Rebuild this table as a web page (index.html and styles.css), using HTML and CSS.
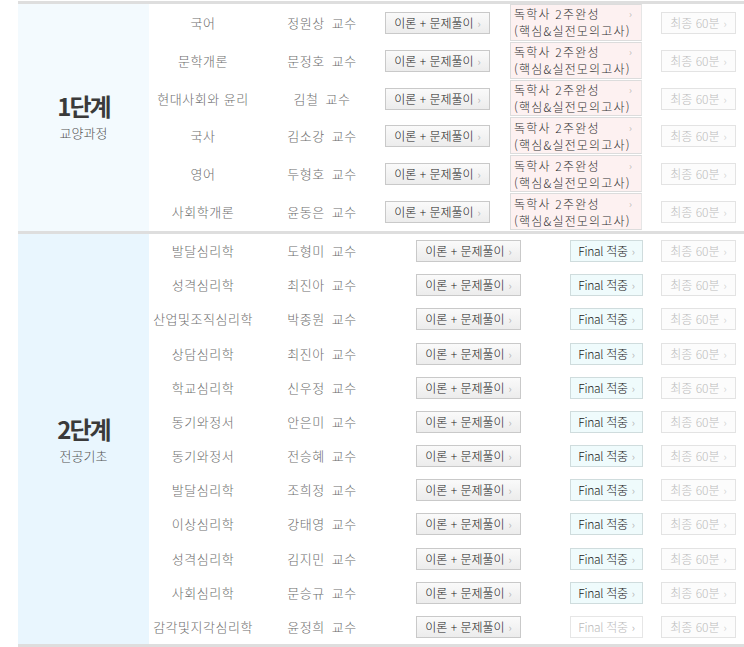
FILE: index.html
```html
<!DOCTYPE html>
<html lang="ko">
<head>
<meta charset="utf-8">
<link rel="stylesheet" href="styles.css">
</head>
<body>
<div class="wrap">
  <section class="stage stage1">
    <div class="label"><div class="lv">1단계</div><div class="sub">교양과정</div></div>
    <div class="rows">
      <div class="row"><span class="subj">국어</span><span class="prof">정원상 교수</span><span class="btn b1">이론 + 문제풀이 <i>›</i></span><span class="pink"><span class="pl">독학사 2주완성<i>›</i></span><span class="p2">(핵심&amp;실전모의고사)</span></span><span class="btn off">최종 60분 <i>›</i></span></div>
      <div class="row"><span class="subj">문학개론</span><span class="prof">문정호 교수</span><span class="btn b1">이론 + 문제풀이 <i>›</i></span><span class="pink"><span class="pl">독학사 2주완성<i>›</i></span><span class="p2">(핵심&amp;실전모의고사)</span></span><span class="btn off">최종 60분 <i>›</i></span></div>
      <div class="row"><span class="subj">현대사회와 윤리</span><span class="prof">김철 교수</span><span class="btn b1">이론 + 문제풀이 <i>›</i></span><span class="pink"><span class="pl">독학사 2주완성<i>›</i></span><span class="p2">(핵심&amp;실전모의고사)</span></span><span class="btn off">최종 60분 <i>›</i></span></div>
      <div class="row"><span class="subj">국사</span><span class="prof">김소강 교수</span><span class="btn b1">이론 + 문제풀이 <i>›</i></span><span class="pink"><span class="pl">독학사 2주완성<i>›</i></span><span class="p2">(핵심&amp;실전모의고사)</span></span><span class="btn off">최종 60분 <i>›</i></span></div>
      <div class="row"><span class="subj">영어</span><span class="prof">두형호 교수</span><span class="btn b1">이론 + 문제풀이 <i>›</i></span><span class="pink"><span class="pl">독학사 2주완성<i>›</i></span><span class="p2">(핵심&amp;실전모의고사)</span></span><span class="btn off">최종 60분 <i>›</i></span></div>
      <div class="row"><span class="subj">사회학개론</span><span class="prof">윤동은 교수</span><span class="btn b1">이론 + 문제풀이 <i>›</i></span><span class="pink"><span class="pl">독학사 2주완성<i>›</i></span><span class="p2">(핵심&amp;실전모의고사)</span></span><span class="btn off">최종 60분 <i>›</i></span></div>
    </div>
  </section>
  <section class="stage stage2">
    <div class="label"><div class="lv">2단계</div><div class="sub">전공기초</div></div>
    <div class="rows">
      <div class="row"><span class="subj">발달심리학</span><span class="prof">도형미 교수</span><span class="btn b2">이론 + 문제풀이 <i>›</i></span><span class="btn fin">Final 적중 <i>›</i></span><span class="btn off">최종 60분 <i>›</i></span></div>
      <div class="row"><span class="subj">성격심리학</span><span class="prof">최진아 교수</span><span class="btn b2">이론 + 문제풀이 <i>›</i></span><span class="btn fin">Final 적중 <i>›</i></span><span class="btn off">최종 60분 <i>›</i></span></div>
      <div class="row"><span class="subj">산업및조직심리학</span><span class="prof">박종원 교수</span><span class="btn b2">이론 + 문제풀이 <i>›</i></span><span class="btn fin">Final 적중 <i>›</i></span><span class="btn off">최종 60분 <i>›</i></span></div>
      <div class="row"><span class="subj">상담심리학</span><span class="prof">최진아 교수</span><span class="btn b2">이론 + 문제풀이 <i>›</i></span><span class="btn fin">Final 적중 <i>›</i></span><span class="btn off">최종 60분 <i>›</i></span></div>
      <div class="row"><span class="subj">학교심리학</span><span class="prof">신우정 교수</span><span class="btn b2">이론 + 문제풀이 <i>›</i></span><span class="btn fin">Final 적중 <i>›</i></span><span class="btn off">최종 60분 <i>›</i></span></div>
      <div class="row"><span class="subj">동기와정서</span><span class="prof">안은미 교수</span><span class="btn b2">이론 + 문제풀이 <i>›</i></span><span class="btn fin">Final 적중 <i>›</i></span><span class="btn off">최종 60분 <i>›</i></span></div>
      <div class="row"><span class="subj">동기와정서</span><span class="prof">전승혜 교수</span><span class="btn b2">이론 + 문제풀이 <i>›</i></span><span class="btn fin">Final 적중 <i>›</i></span><span class="btn off">최종 60분 <i>›</i></span></div>
      <div class="row"><span class="subj">발달심리학</span><span class="prof">조희정 교수</span><span class="btn b2">이론 + 문제풀이 <i>›</i></span><span class="btn fin">Final 적중 <i>›</i></span><span class="btn off">최종 60분 <i>›</i></span></div>
      <div class="row"><span class="subj">이상심리학</span><span class="prof">강태영 교수</span><span class="btn b2">이론 + 문제풀이 <i>›</i></span><span class="btn fin">Final 적중 <i>›</i></span><span class="btn off">최종 60분 <i>›</i></span></div>
      <div class="row"><span class="subj">성격심리학</span><span class="prof">김지민 교수</span><span class="btn b2">이론 + 문제풀이 <i>›</i></span><span class="btn fin">Final 적중 <i>›</i></span><span class="btn off">최종 60분 <i>›</i></span></div>
      <div class="row"><span class="subj">사회심리학</span><span class="prof">문승규 교수</span><span class="btn b2">이론 + 문제풀이 <i>›</i></span><span class="btn fin">Final 적중 <i>›</i></span><span class="btn off">최종 60분 <i>›</i></span></div>
      <div class="row"><span class="subj">감각및지각심리학</span><span class="prof">윤정희 교수</span><span class="btn b2">이론 + 문제풀이 <i>›</i></span><span class="btn fin dis">Final 적중 <i>›</i></span><span class="btn off">최종 60분 <i>›</i></span></div>
    </div>
  </section>
</div>
</body>
</html>
```

FILE: styles.css
```css
html, body {
  margin: 0;
  padding: 0;
  background: #fff;
}
body {
  font-family: "Noto Sans CJK KR", "Noto Sans", sans-serif;
  font-size: 12px;
  color: #666;
}
.wrap {
  margin: 1px 0 0 18px;
  width: 726px;
  border-top: 3px solid #dedede;
  border-bottom: 3px solid #dedede;
}
.stage {
  display: grid;
  grid-template-columns: 131px 1fr;
}
.stage1 {
  height: 227px;
  border-bottom: 3px solid #dedede;
}
.stage2 {
  height: 410px;
}
.label {
  display: flex;
  flex-direction: column;
  align-items: center;
  justify-content: center;
  box-sizing: border-box;
}
.stage1 .label { background: #f3fafe; padding-bottom: 6px; }
.stage2 .label { background: #e9f6fe; padding-bottom: 2px; }
.lv {
  font-size: 24px;
  font-weight: bold;
  color: #3a3a3a;
  letter-spacing: -2px;
  line-height: 35px;
}
.sub {
  font-size: 13px;
  font-weight: 300;
  color: #555;
  line-height: 19px;
}
.rows {
  display: grid;
}
.stage1 .rows { grid-template-rows: repeat(6, 1fr); }
.stage2 .rows { grid-template-rows: repeat(12, 1fr); }
.row {
  display: grid;
  align-items: center;
  line-height: 16px;
  white-space: nowrap;
}
.stage1 .row { grid-template-columns: 108px 126px 127px 151px 1fr; }
.stage2 .row { grid-template-columns: 108px 126px 187px 91px 1fr; }
.subj, .prof {
  text-align: center;
  color: #6e6e6e;
  font-size: 13px;
  font-weight: 300;
  letter-spacing: 0.5px;
}
.prof { word-spacing: 3px; padding-left: 4px; }
.btn {
  box-sizing: border-box;
  height: 22px;
  display: flex;
  align-items: center;
  justify-content: center;
  border: 1px solid #c9c9c9;
  color: #222;
  font-size: 12px;
  font-weight: 300;
  justify-self: start;
}
.btn i {
  font-style: normal;
  color: #aaa;
  font-size: 11px;
  margin-left: 4px;
}
.b1, .b2 {
  width: 105px;
  background: linear-gradient(#fafafa, #ececec);
}
.b1 { margin-left: 2px; }
.b2 { margin-left: 33px; }
.fin {
  width: 73px;
  background: #effbfc;
  border-color: #cfdcdd;
  letter-spacing: -0.3px;
}
.fin.dis {
  background: #fff;
  border-color: #e6e6e6;
  color: #bbb;
}
.off {
  width: 75px;
  background: #fcfcfc;
  border-color: #e3e3e3;
  color: #bdbdbd;
}
.off i { color: #ccc; }
.pink {
  box-sizing: border-box;
  width: 132px;
  height: calc(100% - 1px);
  align-self: start;
  background: #fdf1f1;
  border: 1px solid #dcdcdc;
  border-right-color: #e6e6e6;
  display: flex;
  flex-direction: column;
  justify-content: center;
  padding-left: 3px;
  color: #333;
  font-size: 12px;
  font-weight: 300;
  line-height: 17px;
  letter-spacing: 1.2px;
}
.pl {
  display: flex;
  justify-content: space-between;
  padding-right: 8px;
}
.pl i {
  font-style: normal;
  color: #aaa;
  font-size: 10px;
}
```
